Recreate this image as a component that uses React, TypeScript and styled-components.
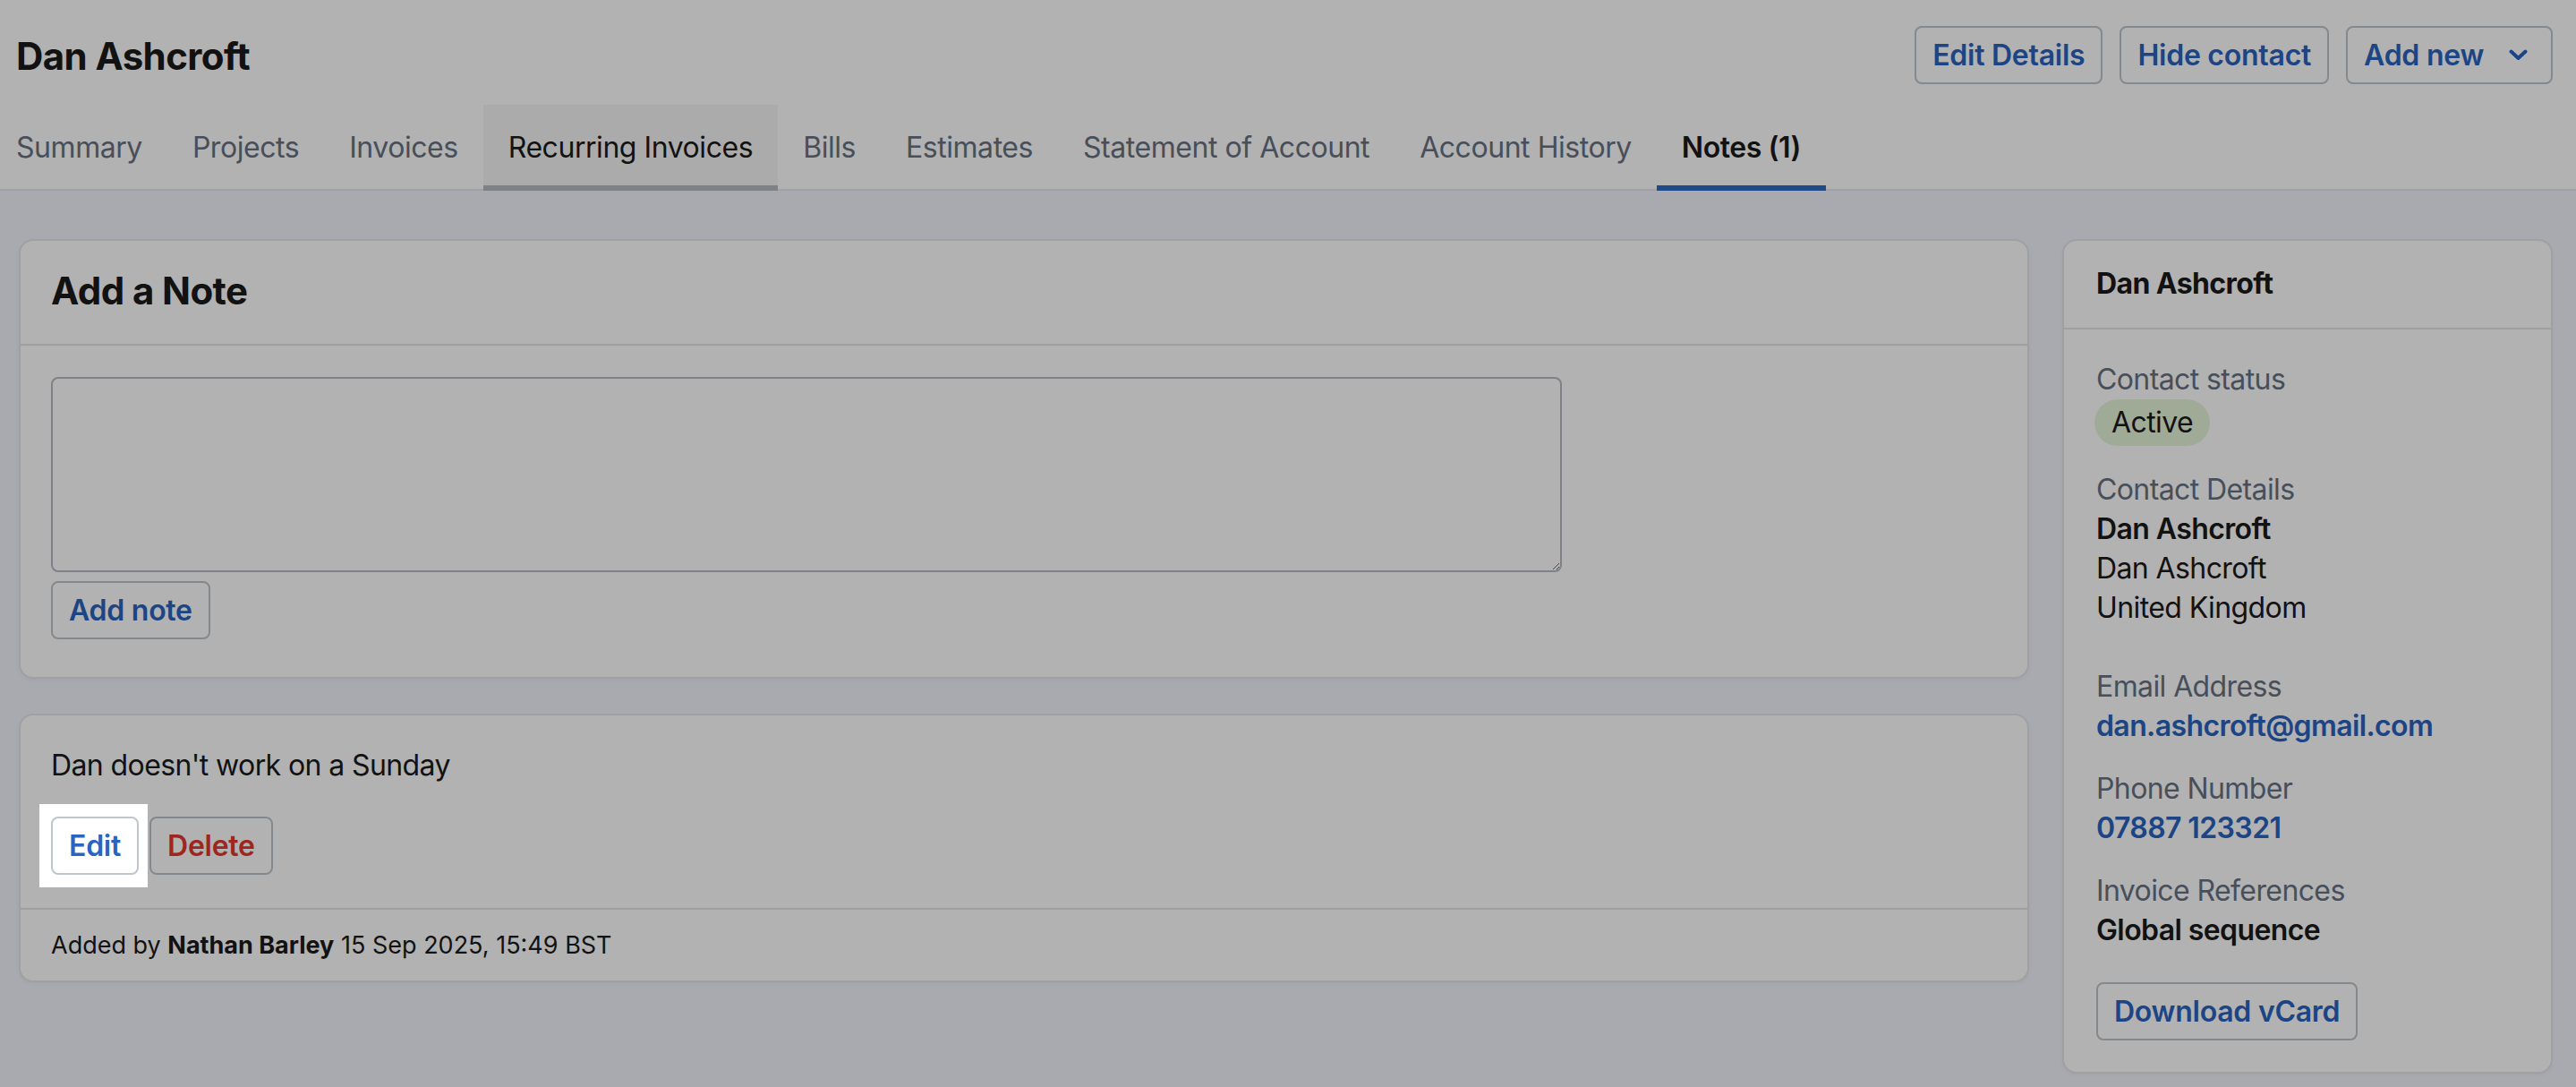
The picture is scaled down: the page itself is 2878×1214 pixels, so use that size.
import styled, { createGlobalStyle, css } from 'styled-components';

const GlobalStyle = createGlobalStyle`
  * { box-sizing: border-box; }
  html, body { margin: 0; padding: 0; }
  body {
    background: #f1f4fb;
    font-family: Inter, "Noto Sans", "Liberation Sans", sans-serif;
    font-size: 32px;
    line-height: 44px;
    letter-spacing: -0.6px;
    color: #1a1a1a;
    min-height: 100vh;
  }
`;

const Header = styled.header`
  background: #fff;
  padding: 29px 26px 0 18px;
`;

const TitleRow = styled.div`
  display: flex;
  align-items: center;
  justify-content: space-between;
  height: 65px;
`;

const PageTitle = styled.h1`
  margin: 0;
  padding-top: 2px;
  font-size: 42px;
  line-height: 52px;
  font-weight: 700;
  letter-spacing: -0.6px;
`;

const Actions = styled.div`
  display: flex;
  gap: 19px;
`;

const Button = styled.button<{ $tone?: 'blue' | 'red' }>`
  display: inline-flex;
  align-items: center;
  font-family: inherit;
  font-size: 32px;
  line-height: 43px;
  font-weight: 600;
  letter-spacing: -0.25px;
  padding: 9px 18px;
  border: 2px solid #bec5cc;
  border-radius: 8px;
  background: #fff;
  color: ${p => (p.$tone === 'red' ? '#e2372d' : '#2a64c0')};
  cursor: pointer;
`;

const Chevron = styled.svg`
  margin: 0 8px 0 28px;
`;

const Tabs = styled.nav`
  display: flex;
  margin: 23px -26px 0 -28px;
  border-bottom: 2px solid #e5e7ed;
`;

const Tab = styled.a<{ $active?: boolean; $hover?: boolean }>`
  padding: 26px 28px 20px;
  margin-bottom: -2px;
  border-bottom: 6px solid transparent;
  font-size: 32px;
  line-height: 44px;
  letter-spacing: -0.45px;
  color: #677281;
  text-decoration: none;
  white-space: nowrap;
  ${p =>
    p.$hover &&
    css`
      background: #f5f5f5;
      border-bottom-color: #b5bbc0;
      color: #1a1a1a;
    `}
  ${p =>
    p.$active &&
    css`
      font-weight: 600;
      color: #1a1a1a;
      border-bottom-color: #2b6ac6;
    `}
`;

const Main = styled.main`
  display: grid;
  grid-template-columns: minmax(0, 1fr) 548px;
  gap: 37px;
  align-items: start;
  padding: 54px 26px 40px 21px;
`;

const Column = styled.div`
  display: flex;
  flex-direction: column;
  gap: 39px;
`;

const Card = styled.section`
  background: #fff;
  border: 2px solid #e5e5ea;
  border-radius: 16px;
  box-shadow: 0 2px 4px rgba(20, 30, 50, 0.04);
`;

const CardHeader = styled.div<{ $side?: boolean }>`
  padding: ${p => (p.$side ? '26px 36px 27px' : '30px 34px 33px')};
  border-bottom: 2px solid #e5e5ea;
`;

const CardTitle = styled.h2<{ $small?: boolean }>`
  margin: 0;
  font-weight: 700;
  font-size: ${p => (p.$small ? '32px' : '42px')};
  line-height: ${p => (p.$small ? '44px' : '52px')};
  letter-spacing: -0.6px;
`;

const CardBody = styled.div<{ $pad: string }>`
  padding: ${p => p.$pad};
`;

const NoteInput = styled.textarea`
  display: block;
  width: 1688px;
  max-width: 100%;
  height: 218px;
  margin: 0 0 10px;
  border: 2px solid #b5bbc1;
  border-radius: 8px;
  font-family: inherit;
  font-size: 32px;
  background: #fff;
`;

const NoteText = styled.p`
  margin: 0 0 35px;
`;

const ButtonRow = styled.div`
  display: flex;
  gap: 12px;
`;

const Spotlight = styled.div`
  position: relative;
  z-index: 101;
  background: #fff;
  padding: 14px 10px 14px 13px;
  margin: -14px -10px -14px -13px;
  display: flex;
`;

const NoteFooter = styled.div`
  padding: 20px 34px 19px;
  border-top: 2px solid #e5e5ea;
  font-size: 27px;
  line-height: 40px;
  letter-spacing: 0;
`;

const Field = styled.div<{ $gap?: number }>`
  margin-bottom: ${p => p.$gap ?? 26}px;
`;

const Label = styled.div`
  color: #677281;
`;

const Value = styled.div<{ $bold?: boolean; $link?: boolean }>`
  font-weight: ${p => (p.$bold || p.$link ? 600 : 400)};
  color: ${p => (p.$link ? '#2a64c0' : '#1a1a1a')};
`;

const Pill = styled.span`
  display: inline-block;
  margin-left: -2px;
  padding: 4px 19px;
  border-radius: 26px;
  background: #e5f5d9;
  color: #1a1a1a;
`;

const Overlay = styled.div`
  position: fixed;
  inset: 0;
  z-index: 100;
  background: rgba(0, 0, 0, 0.3);
  pointer-events: none;
`;

const tabs = [
  'Summary',
  'Projects',
  'Invoices',
  'Recurring Invoices',
  'Bills',
  'Estimates',
  'Statement of Account',
  'Account History',
  'Notes (1)',
];

export default function App() {
  return (
    <>
      <GlobalStyle />
      <Header>
        <TitleRow>
          <PageTitle>Dan Ashcroft</PageTitle>
          <Actions>
            <Button>Edit Details</Button>
            <Button>Hide contact</Button>
            <Button>
              Add new
              <Chevron width="21" height="13" viewBox="0 0 21 13" fill="none">
                <polyline points="2.5,2.5 10.5,10 18.5,2.5" stroke="#2a64c0" strokeWidth="4" strokeLinecap="round" strokeLinejoin="round" />
              </Chevron>
            </Button>
          </Actions>
        </TitleRow>
        <Tabs>
          {tabs.map(t => (
            <Tab key={t} href="#" $hover={t === 'Recurring Invoices'} $active={t === 'Notes (1)'}>
              {t}
            </Tab>
          ))}
        </Tabs>
      </Header>

      <Main>
        <Column>
          <Card>
            <CardHeader>
              <CardTitle>Add a Note</CardTitle>
            </CardHeader>
            <CardBody $pad="35px 34px 42px">
              <NoteInput />
              <Button>Add note</Button>
            </CardBody>
          </Card>

          <Card>
            <CardBody $pad="34px 34px 37px">
              <NoteText>Dan doesn't work on a Sunday</NoteText>
              <ButtonRow>
                <Spotlight>
                  <Button>Edit</Button>
                </Spotlight>
                <Button $tone="red">Delete</Button>
              </ButtonRow>
            </CardBody>
            <NoteFooter>
              Added by <b>Nathan Barley</b> 15 Sep 2025, 15:49 BST
            </NoteFooter>
          </Card>
        </Column>

        <Card>
          <CardHeader $side>
            <CardTitle $small>Dan Ashcroft</CardTitle>
          </CardHeader>
          <CardBody $pad="34px 36px 35px">
            <Field $gap={27}>
              <Label>Contact status</Label>
              <Pill>Active</Pill>
            </Field>
            <Field $gap={44}>
              <Label>Contact Details</Label>
              <Value $bold>Dan Ashcroft</Value>
              <Value>Dan Ashcroft</Value>
              <Value>United Kingdom</Value>
            </Field>
            <Field>
              <Label>Email Address</Label>
              <Value $link>dan.ashcroft@gmail.com</Value>
            </Field>
            <Field>
              <Label>Phone Number</Label>
              <Value $link>07887 123321</Value>
            </Field>
            <Field $gap={36}>
              <Label>Invoice References</Label>
              <Value $bold>Global sequence</Value>
            </Field>
            <Button>Download vCard</Button>
          </CardBody>
        </Card>
      </Main>

      <Overlay />
    </>
  );
}
